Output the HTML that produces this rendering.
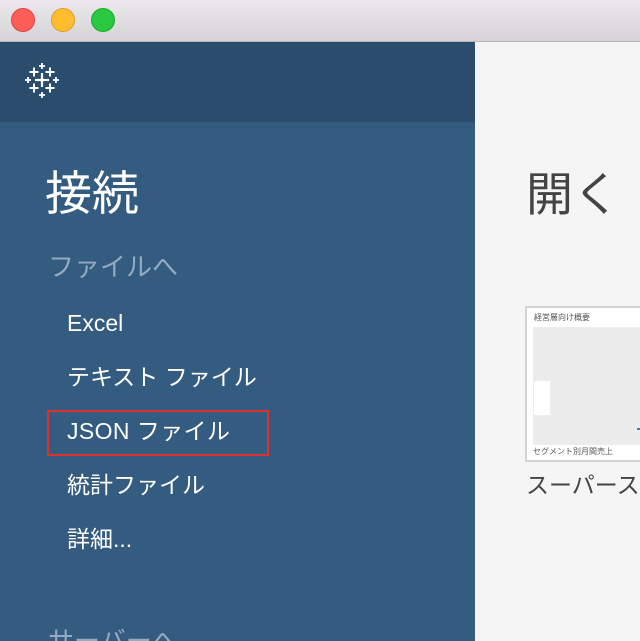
<!DOCTYPE html>
<html><head><meta charset="utf-8"><style>
*{margin:0;padding:0}
html,body{width:640px;height:641px;overflow:hidden}
body{position:relative;background:#f5f5f5;font-family:"Liberation Sans","Noto Sans CJK JP",sans-serif}
.t{position:absolute;line-height:1;white-space:nowrap}
.dot{position:absolute;top:8px;width:24px;height:24px;border-radius:50%}
</style></head><body>
<div style="position:absolute;left:0;top:0;width:640px;height:41px;background:linear-gradient(#ebe9eb,#d5d3d5);border-bottom:1px solid #b8b6b8"></div>
<div class="dot" style="left:11px;background:#fd5e57;border:1px solid #e0443e;box-sizing:border-box"></div>
<div class="dot" style="left:51px;background:#febc2e;border:1px solid #dea024;box-sizing:border-box"></div>
<div class="dot" style="left:91px;background:#28c840;border:1px solid #1aab29;box-sizing:border-box"></div>
<div style="position:absolute;left:0;top:42px;width:475px;height:80px;background:#2a4d6e"></div>
<div style="position:absolute;left:0;top:122px;width:475px;height:519px;background:#345b80"></div>
<svg style="position:absolute;left:0;top:0" width="80" height="110" stroke="#fff" fill="none">
<path d="M42 73v14M35 80h14" stroke-width="2.2"/>
<path d="M34 67.5v9M29.5 72h9M50 67.5v9M45.5 72h9M34 83.5v9M29.5 88h9M50 83.5v9M45.5 88h9" stroke-width="2"/>
<path d="M42 63v6M39 66h6M42 92v6M39 95h6M28 77v6M25 80h6M56 77v6M53 80h6" stroke-width="1.8"/>
</svg>
<div class="t" style="left:45px;top:170px;font-size:47px;color:#fff">接続</div>
<div class="t" style="left:48px;top:254px;font-size:26px;color:#94aac0">ファイルへ</div>
<div class="t" style="left:67px;top:312px;font-size:23px;color:#fff">Excel</div>
<div class="t" style="left:67px;top:366px;font-size:23px;color:#fff">テキスト ファイル</div>
<div class="t" style="left:67px;top:420px;font-size:23px;color:#fff;letter-spacing:0.4px">JSON ファイル</div>
<div class="t" style="left:67px;top:474px;font-size:23px;color:#fff">統計ファイル</div>
<div class="t" style="left:67px;top:528px;font-size:23px;color:#fff">詳細...</div>
<div style="position:absolute;left:47px;top:410px;width:222px;height:46px;border:2px solid #e0302a;box-sizing:border-box"></div>
<div class="t" style="left:48px;top:628px;font-size:26px;color:#94aac0">サーバーへ</div>
<div class="t" style="left:526px;top:171px;font-size:47px;color:#444">開く</div>
<div style="position:absolute;left:525px;top:306px;width:130px;height:156px;border:2px solid #d3d3d3;background:#fff;box-sizing:border-box"></div>
<div style="position:absolute;left:533px;top:327px;width:120px;height:118px;background:#ececec"></div>
<div style="position:absolute;left:534px;top:381px;width:16px;height:34px;background:#fff"></div>
<div style="position:absolute;left:637px;top:428px;width:3px;height:2px;background:#4a79b0"></div>
<div class="t" style="left:534px;top:314px;font-size:8px;color:#555">経営層向け概要</div>
<div class="t" style="left:533px;top:448px;font-size:8px;color:#555">セグメント別月間売上</div>
<div class="t" style="left:526px;top:474px;font-size:23px;color:#444">スーパース</div>
</body></html>
